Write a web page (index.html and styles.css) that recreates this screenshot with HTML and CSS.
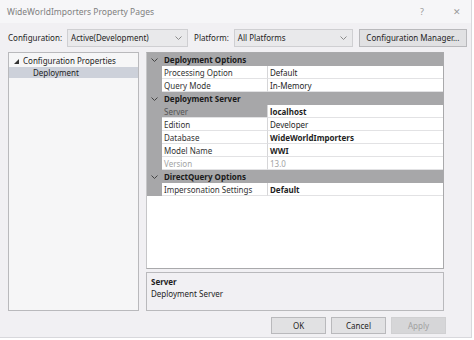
FILE: index.html
```html
<!DOCTYPE html>
<html lang="en">
<head>
    <meta charset="UTF-8">
    <title>WideWorldImporters Property Pages</title>
    <link rel="stylesheet" href="styles.css">
</head>
<body>
    <div class="window">
        <div class="titlebar">
            <span class="title">WideWorldImporters Property Pages</span>
            <span class="title-btn help">?</span>
            <span class="title-btn close">&#x2715;</span>
        </div>

        <div class="toolbar">
            <span class="label">Configuration:</span>
            <div class="combo combo-config">
                <span>Active(Development)</span>
                <svg class="chev" width="7" height="4" viewBox="0 0 7 4"><path d="M0.5 0.5 L3.5 3.5 L6.5 0.5" fill="none" stroke="#8a8a8a" stroke-width="1"/></svg>
            </div>
            <span class="label">Platform:</span>
            <div class="combo combo-platform">
                <span>All Platforms</span>
                <svg class="chev" width="7" height="4" viewBox="0 0 7 4"><path d="M0.5 0.5 L3.5 3.5 L6.5 0.5" fill="none" stroke="#8a8a8a" stroke-width="1"/></svg>
            </div>
            <div class="btn btn-manager">Configuration Manager...</div>
        </div>

        <div class="main">
            <div class="tree">
                <div class="tree-item">
                    <svg class="expander" width="5" height="5" viewBox="0 0 5 5"><path d="M5 0 L5 5 L0 5 Z" fill="#333"/></svg>
                    <span>Configuration Properties</span>
                </div>
                <div class="tree-item child selected">Deployment</div>
            </div>

            <div class="right">
                <div class="grid">
                    <div class="row category">
                        <span class="gutter"><svg width="7" height="4" viewBox="0 0 7 4"><path d="M0.5 0.5 L3.5 3.5 L6.5 0.5" fill="none" stroke="#444" stroke-width="1"/></svg></span>
                        <span class="cat-name">Deployment Options</span>
                    </div>
                    <div class="row">
                        <span class="gutter"></span>
                        <span class="name">Processing Option</span>
                        <span class="value">Default</span>
                    </div>
                    <div class="row">
                        <span class="gutter"></span>
                        <span class="name">Query Mode</span>
                        <span class="value">In-Memory</span>
                    </div>
                    <div class="row category">
                        <span class="gutter"><svg width="7" height="4" viewBox="0 0 7 4"><path d="M0.5 0.5 L3.5 3.5 L6.5 0.5" fill="none" stroke="#444" stroke-width="1"/></svg></span>
                        <span class="cat-name">Deployment Server</span>
                    </div>
                    <div class="row active">
                        <span class="gutter"></span>
                        <span class="name">Server</span>
                        <span class="value bold">localhost</span>
                    </div>
                    <div class="row">
                        <span class="gutter"></span>
                        <span class="name">Edition</span>
                        <span class="value">Developer</span>
                    </div>
                    <div class="row">
                        <span class="gutter"></span>
                        <span class="name">Database</span>
                        <span class="value bold">WideWorldImporters</span>
                    </div>
                    <div class="row">
                        <span class="gutter"></span>
                        <span class="name">Model Name</span>
                        <span class="value bold">WWI</span>
                    </div>
                    <div class="row disabled">
                        <span class="gutter"></span>
                        <span class="name">Version</span>
                        <span class="value">13.0</span>
                    </div>
                    <div class="row category">
                        <span class="gutter"><svg width="7" height="4" viewBox="0 0 7 4"><path d="M0.5 0.5 L3.5 3.5 L6.5 0.5" fill="none" stroke="#444" stroke-width="1"/></svg></span>
                        <span class="cat-name">DirectQuery Options</span>
                    </div>
                    <div class="row">
                        <span class="gutter"></span>
                        <span class="name">Impersonation Settings</span>
                        <span class="value bold">Default</span>
                    </div>
                </div>

                <div class="description">
                    <div class="desc-title">Server</div>
                    <div class="desc-text">Deployment Server</div>
                </div>
            </div>
        </div>

        <div class="footer">
            <div class="btn">OK</div>
            <div class="btn">Cancel</div>
            <div class="btn disabled">Apply</div>
        </div>
    </div>
</body>
</html>
```

FILE: styles.css
```css
* {
    margin: 0;
    padding: 0;
    box-sizing: border-box;
}

body {
    font-family: 'Noto Sans', 'Open Sans', sans-serif;
    font-size: 8px;
    color: #1e1e1e;
    background: #ffffff;
}

.window {
    width: 472px;
    height: 338px;
    background: #f1f0f3;
    border-right: 1px solid #d8d8dc;
    border-bottom: 1px solid #d8d8dc;
}

/* Barre de titre */
.titlebar {
    height: 23px;
    display: flex;
    align-items: center;
    padding-left: 7px;
    color: #808080;
    font-size: 8.5px;
    background: #f6f6f8;
}

.title {
    flex: 1;
}

.title-btn {
    text-align: center;
    color: #9a9a9a;
    font-size: 9px;
}

.title-btn.help {
    width: 30px;
    margin-right: 6px;
}

.title-btn.close {
    width: 28px;
}

/* Barre d'outils */
.toolbar {
    display: flex;
    align-items: center;
    height: 19px;
    margin-top: 5px;
    padding-left: 8px;
}

.label {
    margin-right: 5px;
}

.combo {
    height: 18px;
    background: #e9e9eb;
    border: 1px solid #cfcfd2;
    display: flex;
    align-items: center;
    justify-content: space-between;
    padding: 0 5px 0 3px;
    margin-right: 6px;
}

.combo-config {
    width: 121px;
}

.combo-platform {
    width: 119px;
}

.btn {
    height: 17px;
    width: 55px;
    background: #e1e1e3;
    border: 1px solid #b9b9bc;
    display: flex;
    align-items: center;
    justify-content: center;
}

.btn-manager {
    width: 108px;
    height: 18px;
}

.btn.disabled {
    color: #a0a0a0;
    background: #d6d6d8;
    border-color: #d0d0d2;
}

/* Zone principale */
.main {
    display: flex;
    margin-top: 5px;
    padding-left: 8px;
    gap: 7px;
    height: 259px;
}

.tree {
    width: 131px;
    background: #f6f6f7;
    border: 1px solid #b9b9bc;
    padding-top: 2px;
}

.tree-item {
    height: 11px;
    display: flex;
    align-items: center;
    padding-left: 5px;
    gap: 4px;
}

.tree-item.child {
    padding-left: 24px;
    margin-top: 1px;
}

.tree-item.selected {
    background: #cdd1da;
}

.expander {
    margin-top: 1px;
}

.right {
    width: 298px;
    display: flex;
    flex-direction: column;
    gap: 3px;
}

/* Grille de propriétés */
.grid {
    height: 217px;
    background: #ffffff;
    border: 1px solid #a9a9ab;
    border-left-color: #c6c6c8;
}

.row {
    height: 13px;
    display: flex;
    align-items: center;
}

.gutter {
    width: 15px;
    height: 100%;
    background: #a7a7a9;
    display: flex;
    align-items: center;
    justify-content: center;
}

.name,
.value {
    height: 100%;
    display: flex;
    align-items: center;
    border-bottom: 1px solid #e2e2e4;
    padding-left: 2px;
}

.name {
    width: 106px;
    color: #333;
    border-right: 1px solid #d6d6d8;
}

.value {
    flex: 1;
}

.bold {
    font-weight: bold;
}

.row.category {
    background: #a7a7a9;
}

.cat-name {
    font-weight: bold;
    padding-left: 2px;
    color: #1a1a1a;
}

.row.active .name {
    background: #a7a7a9;
    color: #555;
}

.row.disabled .name,
.row.disabled .value {
    color: #a3a3a3;
}

/* Description */
.description {
    flex: 1;
    border: 1px solid #b9b9bc;
    background: #f1f0f3;
    padding: 3px 4px;
    line-height: 12px;
}

.desc-title {
    font-weight: bold;
}

/* Boutons du bas */
.footer {
    display: flex;
    justify-content: flex-end;
    gap: 5px;
    padding-right: 25px;
    margin-top: 6px;
}
```
